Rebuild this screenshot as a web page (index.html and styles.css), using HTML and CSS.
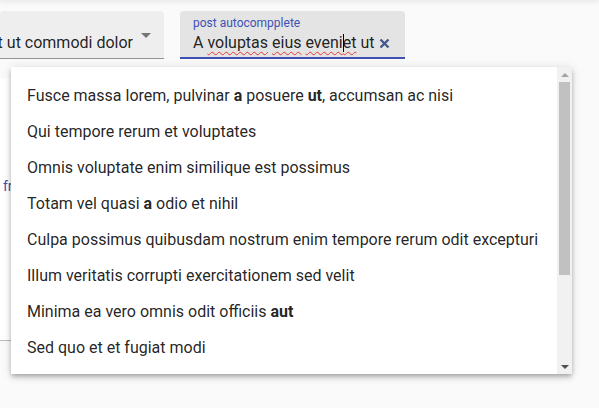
FILE: index.html
```html
<!DOCTYPE html>
<html lang="en">
<head>
<meta charset="utf-8">
<title>Autocomplete</title>
<link rel="stylesheet" href="styles.css">
</head>
<body>
<div class="topbar"></div>
<div class="page">
  <div class="fields">
    <div class="field select-field">
      <div class="select-value"><span>Et ut commodi dolor</span></div>
      <span class="select-arrow"></span>
    </div>
    <div class="field auto-field">
      <div class="label">post autocompplete</div>
      <div class="input-row">
        <span class="input-text">A <span class="misspelt">voluptas</span> <span class="misspelt">eius</span> <span class="misspelt">eveni<span class="caret"></span>et</span> ut</span>
        <svg class="clear" width="11" height="11" viewBox="0 0 11 11"><path d="M1.5 1.5 L9.5 9.5 M9.5 1.5 L1.5 9.5" stroke="#44578f" stroke-width="2.4" stroke-linecap="butt"/></svg>
      </div>
    </div>
  </div>
  <div class="card">
    <p class="card-link">from</p>
  </div>
</div>

<div class="panel">
  <ul class="options">
    <li>Fusce massa lorem, pulvinar <b>a</b> posuere <b>ut</b>, accumsan ac nisi</li>
    <li>Qui tempore rerum et voluptates</li>
    <li>Omnis voluptate enim similique est possimus</li>
    <li>Totam vel quasi <b>a</b> odio et nihil</li>
    <li>Culpa possimus quibusdam nostrum enim tempore rerum odit excepturi</li>
    <li>Illum veritatis corrupti exercitationem sed velit</li>
    <li>Minima ea vero omnis odit officiis <b>aut</b></li>
    <li>Sed quo et et fugiat modi</li>
  </ul>
  <div class="scrollbar">
    <div class="sb-btn"><span class="sb-up"></span></div>
    <div class="sb-track"><div class="sb-thumb"></div></div>
    <div class="sb-btn sb-btn-down"><span class="sb-down"></span></div>
  </div>
</div>
</body>
</html>
```

FILE: styles.css
```css
html, body {
  margin: 0;
  padding: 0;
}
body {
  width: 599px;
  height: 408px;
  overflow: hidden;
  background: #fafafa;
  font-family: Roboto, "Noto Sans", sans-serif;
  color: rgba(0, 0, 0, 0.87);
}
.topbar {
  height: 0;
  box-shadow: 0 0 5px 1px rgba(0, 0, 0, 0.16);
}
.page {
  padding-top: 11px;
}
.fields {
  display: flex;
  gap: 16px;
}
.field {
  box-sizing: border-box;
  height: 48px;
  border-radius: 4px 4px 0 0;
}
.select-field {
  width: 164px;
  background: #eeeeee;
  border-bottom: 1px solid #949494;
  padding: 24px 13px 0 0;
  display: flex;
  align-items: flex-start;
  gap: 8px;
}
.select-value {
  flex: 1;
  min-width: 0;
  overflow: hidden;
  display: flex;
  justify-content: flex-end;
  white-space: nowrap;
  font-size: 16px;
  line-height: 16px;
}
.select-arrow {
  flex: none;
  width: 0;
  height: 0;
  margin-top: -2px;
  border-left: 5px solid transparent;
  border-right: 5px solid transparent;
  border-top: 5px solid #757575;
}
.auto-field {
  width: 225px;
  background: #e4e4e4;
  border-bottom: 2px solid #3f51b5;
  padding: 6px 15px 0 13px;
}
.label {
  font-size: 12px;
  line-height: 12px;
  color: #3f51b5;
  white-space: nowrap;
}
.input-row {
  margin-top: 6px;
  display: flex;
  align-items: center;
  height: 16px;
}
.input-text {
  flex: 1;
  font-size: 16px;
  line-height: 16px;
  white-space: nowrap;
}
.misspelt {
  text-decoration: underline wavy #e53935;
  text-decoration-thickness: 1px;
  text-underline-offset: 3px;
}
.caret {
  display: inline-block;
  width: 1px;
  height: 18px;
  margin-right: -1px;
  background: #000;
  vertical-align: -4px;
}
.clear {
  flex: none;
  display: block;
  margin-top: 1px;
}
.card {
  width: 540px;
  height: 262px;
  margin-top: 19px;
  background: #ffffff;
  border-bottom: 1px solid #bdbdbd;
  overflow: hidden;
}
.card-link {
  margin: 100px 0 0 3px;
  font-size: 14px;
  line-height: 16px;
  color: #3f51b5;
}
.panel {
  position: absolute;
  left: 11px;
  top: 67px;
  width: 561px;
  height: 307px;
  background: #ffffff;
  display: flex;
  overflow: hidden;
  box-shadow: 0 2px 4px -1px rgba(0, 0, 0, 0.2), 0 4px 5px 0 rgba(0, 0, 0, 0.14), 0 1px 10px 0 rgba(0, 0, 0, 0.12);
}
.options {
  flex: 1;
  min-width: 0;
  list-style: none;
  margin: 0;
  padding: 11px 0 0;
}
.options li {
  height: 36px;
  line-height: 36px;
  padding: 0 16px;
  font-size: 16px;
  white-space: nowrap;
  overflow: hidden;
}
.options b {
  font-weight: 700;
}
.scrollbar {
  flex: none;
  width: 15px;
  background: #f1f1f1;
  display: flex;
  flex-direction: column;
}
.sb-btn {
  height: 15px;
  display: flex;
  align-items: center;
  justify-content: center;
}
.sb-track {
  flex: 1;
}
.sb-thumb {
  height: 193px;
  margin: 0 2px;
  background: #c1c1c1;
}
.sb-up {
  width: 0;
  height: 0;
  border-left: 4px solid transparent;
  border-right: 4px solid transparent;
  border-bottom: 4px solid #a3a3a3;
}
.sb-down {
  width: 0;
  height: 0;
  border-left: 4px solid transparent;
  border-right: 4px solid transparent;
  border-top: 4px solid #505050;
}
```
